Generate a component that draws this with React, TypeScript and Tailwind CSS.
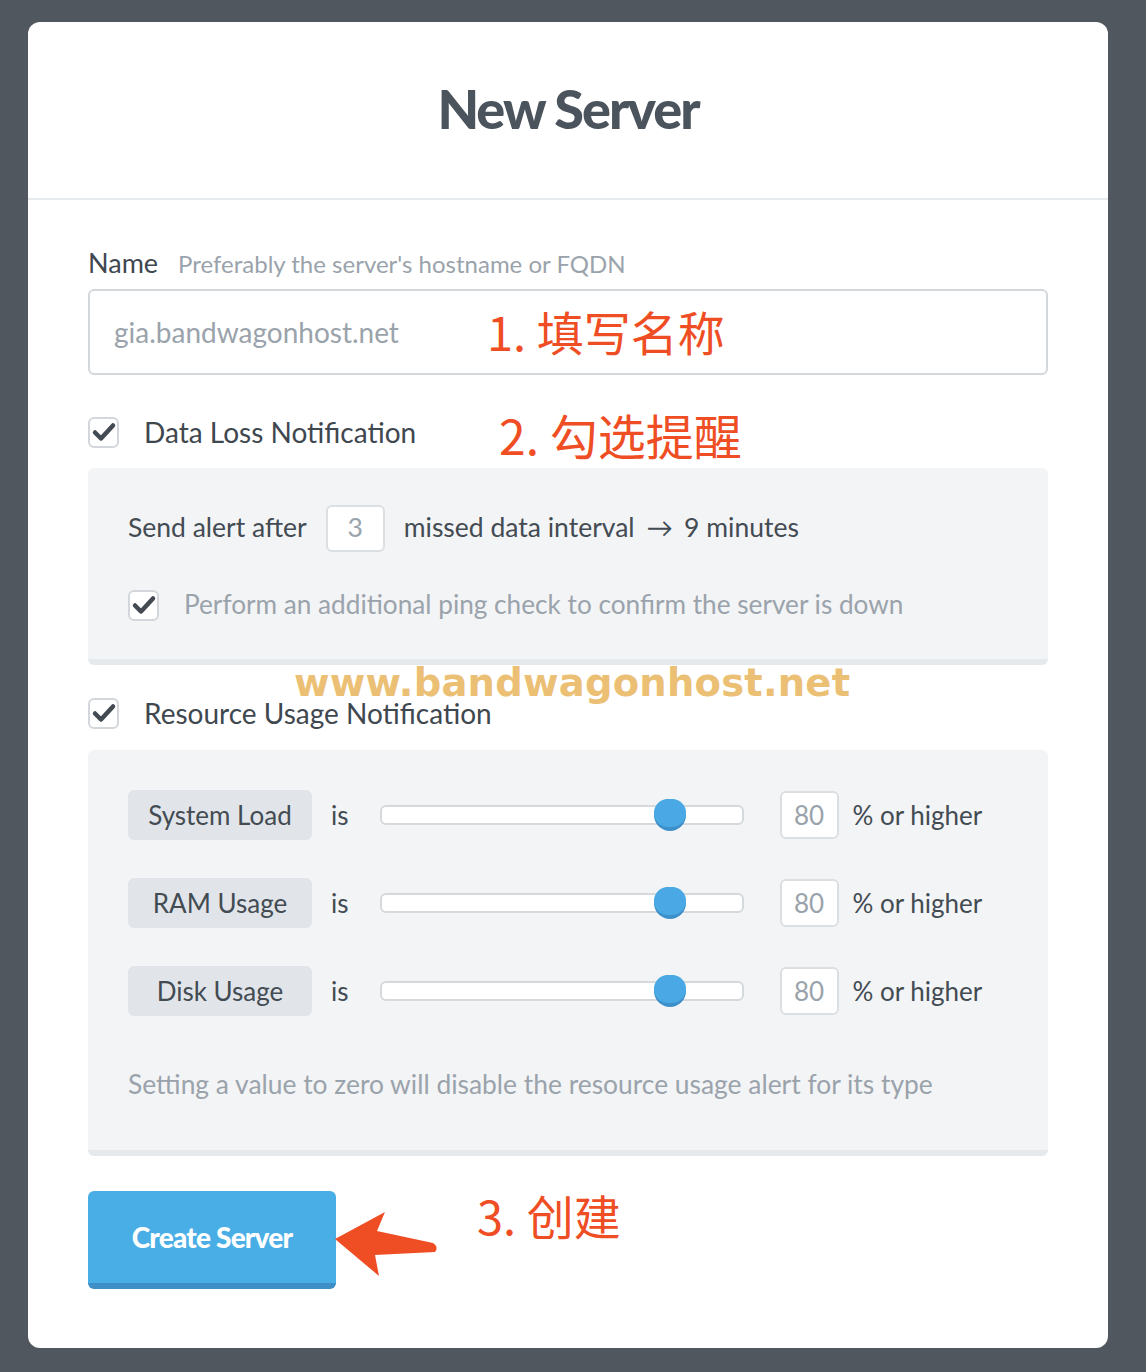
const ui = "font-['Lato','Noto_Sans',sans-serif]";
const cjk = "font-['Noto_Sans_CJK_SC',sans-serif]";

const Check = ({ className = "" }: { className?: string }) => (
  <div
    className={`w-[31px] h-[31px] shrink-0 rounded-[6px] border-2 border-[#d3d7db] bg-white flex items-center justify-center ${className}`}
  >
    <svg width="26" height="26" viewBox="0 0 26 26">
      <path
        d="M4 13.5 L10 19.5 L22 6.5"
        fill="none"
        stroke="#434a52"
        strokeWidth="4.5"
        strokeLinecap="round"
        strokeLinejoin="round"
      />
    </svg>
  </div>
);

const UsageRow = ({ label }: { label: string }) => (
  <div className="flex items-center h-[50px]">
    <div className="w-[184px] h-[50px] rounded-[6px] bg-[#e1e5e9] flex items-center justify-center text-[26px] text-[#434b53]">
      {label}
    </div>
    <span className="ml-[19px] text-[26px] text-[#434b53]">is</span>
    <div className="relative ml-[31px] w-[364px] h-[20px] rounded-[6px] border-2 border-[#d5d9dc] bg-white">
      <div className="absolute left-[272px] top-[-8px] w-[32px] h-[32px] rounded-full bg-[#3d8fca]">
        <div className="w-[32px] h-[28px] rounded-full bg-[#4aa9e4]" />
      </div>
    </div>
    <div className="ml-[36px] w-[59px] h-[48px] rounded-[6px] border-2 border-[#dcdfe2] bg-white flex items-center justify-center text-[26px] text-[#9aa3ab]">
      80
    </div>
    <span className="ml-[14px] text-[26px] text-[#434b53]">% or higher</span>
  </div>
);

export default function App() {
  return (
    <div className={`min-h-[1372px] bg-[#50575f] pt-[22px] pl-[28px] ${ui}`}>
      <div className="relative w-[1080px] h-[1326px] rounded-[12px] bg-white">
        <div className="h-[178px] border-b-2 border-[#e6eaed] flex items-center justify-center">
          <h1 className="text-[54px] font-black tracking-[-2px] text-[#4b545d] mt-[-4px]">
            New Server
          </h1>
        </div>

        <div className="px-[60px] pt-[43px]">
          <div className="flex items-baseline h-[30px]">
            <span className="text-[27px] text-[#3f474f]">Name</span>
            <span className="ml-[20px] text-[24px] text-[#9aa3ab]">
              Preferably the server's hostname or FQDN
            </span>
          </div>

          <div className="relative mt-[16px] h-[86px] rounded-[6px] border-2 border-[#d5d8db] flex items-center px-[24px]">
            <span className="text-[28px] text-[#9aa3ab]">gia.bandwagonhost.net</span>
            <span className={`absolute left-[397px] top-[12px] text-[47px] leading-[56px] text-[#ef4e24] ${cjk}`}>
              1. 填写名称
            </span>
          </div>

          <div className="relative mt-[41px] flex items-center h-[32px]">
            <Check />
            <span className="ml-[25px] text-[28px] text-[#3f474f]">Data Loss Notification</span>
            <span className={`absolute left-[411px] top-[-10px] text-[48px] leading-[56px] text-[#ef4e24] ${cjk}`}>
              2. 勾选提醒
            </span>
          </div>

          <div className="mt-[20px] rounded-[6px] bg-[#f3f4f6] border-b-[6px] border-[#e6e9ec] px-[40px] pt-[37px] pb-[38px]">
            <div className="flex items-center h-[46px] text-[26.5px] text-[#434b53]">
              <span>Send alert after</span>
              <div className="ml-[19px] w-[59px] h-[47px] rounded-[6px] border-2 border-[#dcdfe2] bg-white flex items-center justify-center text-[#9aa3ab]">
                3
              </div>
              <span className="ml-[19px]">missed data interval</span>
              <span className="ml-[12px]">→</span>
              <span className="ml-[11px]">9 minutes</span>
            </div>
            <div className="mt-[38px] flex items-center h-[32px]">
              <Check />
              <span className="ml-[25px] text-[26.2px] text-[#9aa3ab]">
                Perform an additional ping check to confirm the server is down
              </span>
            </div>
          </div>

          <div className="relative mt-[32px] flex items-center h-[32px]">
            <Check />
            <span className="ml-[25px] text-[28px] text-[#3f474f]">Resource Usage Notification</span>
            <span className="absolute left-[206px] top-[-37px] font-['DejaVu_Sans',sans-serif] font-bold text-[38.5px] leading-[46px] tracking-[0.2px] text-[#ebbf74]">
              www.bandwagonhost.net
            </span>
          </div>

          <div className="mt-[21px] rounded-[6px] bg-[#f3f4f6] border-b-[6px] border-[#e6e9ec] px-[40px] pt-[40px] pb-[51px]">
            <div className="flex flex-col gap-[38px]">
              <UsageRow label="System Load" />
              <UsageRow label="RAM Usage" />
              <UsageRow label="Disk Usage" />
            </div>
            <p className="mt-[53px] h-[30px] text-[26.4px] leading-[30px] text-[#9aa3ab]">
              Setting a value to zero will disable the resource usage alert for its type
            </p>
          </div>

          <div className="mt-[35px] flex items-start">
            <button className="w-[248px] h-[98px] rounded-[6px] bg-[#4aaee6] border-b-[6px] border-[#3d8fc5] text-white text-[28px] font-black tracking-[-0.8px]">
              Create Server
            </button>
            <svg width="106" height="70" viewBox="0 0 106 70" className="mt-[18px] -ml-[1px]">
              <path
                d="M0 30 L50 3 L42 22 L98 34 Q104 38 100 43 L40 46 L44 67 Z"
                fill="#ef4e24"
              />
            </svg>
            <span className={`ml-[36px] mt-[-4px] text-[47px] leading-[56px] text-[#ef4e24] ${cjk}`}>
              3. 创建
            </span>
          </div>
        </div>
      </div>
    </div>
  );
}
